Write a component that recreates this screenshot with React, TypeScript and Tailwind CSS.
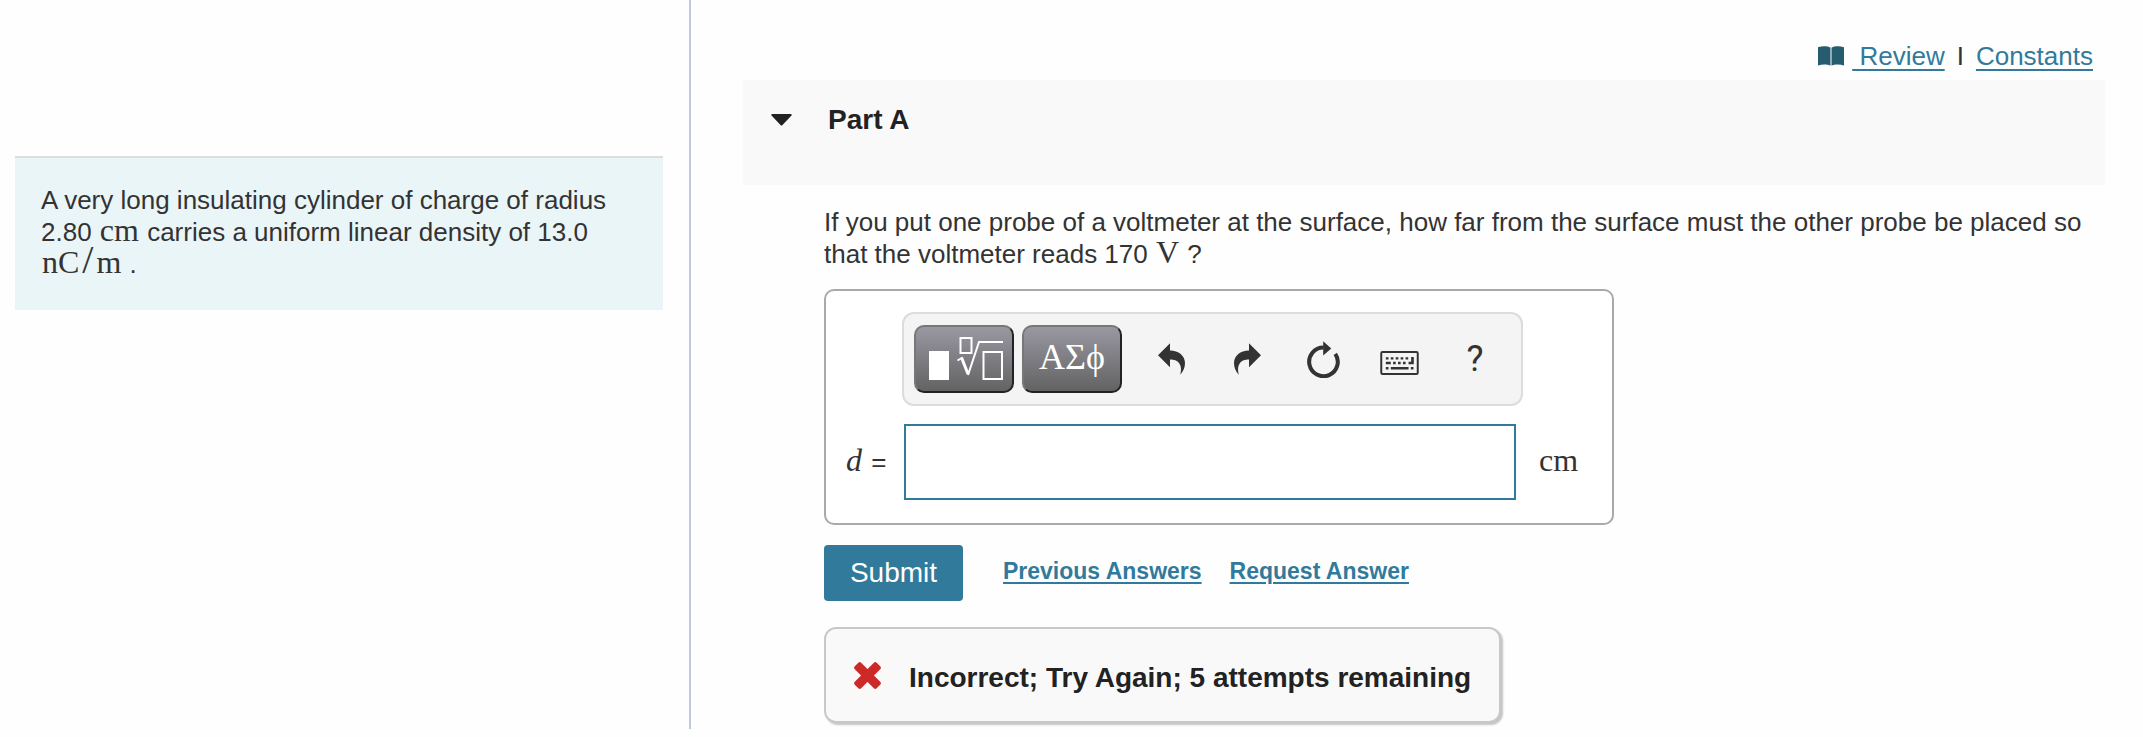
import React, { useState } from "react";

const BookIcon: React.FC = () => (
  <svg className="w-[26px] h-5" viewBox="0 0 26 20" fill="#255c70" aria-hidden="true">
    <path d="M0 1.2C4 0 9 0 12 1.4V19.4C9 18.2 4 18.2 0 19.4Z" />
    <path d="M14 1.4C17 0 22 0 26 1.2V19.4C22 18.2 17 18.2 14 19.4Z" />
    <path d="M12 1.4H14V19.4H12Z" opacity=".5" />
  </svg>
);

const TemplateIcon: React.FC = () => (
  <svg className="w-[78px] h-[44px]" viewBox="-2 0 78 44" fill="none" stroke="#fff" aria-hidden="true">
    <rect x="2" y="14" width="20" height="29" fill="#fff" stroke="none" />
    <rect x="33.5" y="1" width="11" height="15" strokeWidth="2" />
    <path d="M30.5 23.5L35.5 20.5" strokeWidth="2" />
    <path d="M34.5 20.5L41 37" strokeWidth="3" />
    <path d="M41 38L52 5H76" strokeWidth="2" />
    <rect x="56.5" y="15" width="18.5" height="27" strokeWidth="2" />
  </svg>
);

const UndoIcon: React.FC<{ flipped?: boolean }> = ({ flipped }) => (
  <svg
    className={flipped ? "w-[27px] h-8 -scale-x-100" : "w-[27px] h-8"}
    viewBox="0 0 81 95"
    fill="#333"
    aria-hidden="true"
  >
    <path d="M0 36L36 0V22C62 22 81 38 81 60C81 72 76 84 67 95C70 80 70 70 64 61C57 51 48 49 36 49V72Z" />
  </svg>
);

const ResetIcon: React.FC = () => (
  <svg className="w-[33px] h-[37px]" viewBox="0 0 98 110" fill="none" aria-hidden="true">
    <path d="M84 38A42.5 42.5 0 1 1 49 19.5" stroke="#333" strokeWidth="12" />
    <path d="M48 1L72 22L48 43Z" fill="#333" />
  </svg>
);

const KeyboardIcon: React.FC = () => (
  <svg className="w-[39px] h-6" viewBox="0 0 117 73" fill="#333" aria-hidden="true">
    <rect x="3" y="3" width="111" height="67" rx="4" fill="none" stroke="#333" strokeWidth="6" />
    <path d="M17 19h8v7h-8zM32 19h8v7h-8zM47 19h8v7h-8zM62 19h8v7h-8zM77 19h8v7h-8z" />
    <path d="M17 33h15v7H17zM39 33h8v7h-8zM54 33h8v7h-8zM69 33h8v7h-8z" />
    <path d="M94 18h8v22H86v-7h8z" />
    <path d="M17 49h8v7h-8zM32 49h54v7H32zM93 49h8v7h-8z" />
  </svg>
);

const CrossIcon: React.FC = () => (
  <svg className="w-[27px] h-[27px]" viewBox="0 0 27 27" fill="#cc2929" aria-hidden="true">
    <rect x="-2" y="9" width="31" height="9" rx="2" transform="rotate(45 13.5 13.5)" />
    <rect x="-2" y="9" width="31" height="9" rx="2" transform="rotate(-45 13.5 13.5)" />
  </svg>
);

const MathText: React.FC<{ children: React.ReactNode }> = ({ children }) => (
  <span className="mx-px font-['Liberation_Serif',serif] text-[32px] leading-[0]">{children}</span>
);

const keypadClass =
  "flex h-[68px] w-[100px] items-center justify-center rounded-[10px] border-2 border-t-[#777] border-l-[#777] border-r-[#222] border-b-[#222] bg-gradient-to-b from-[#9a98a2] to-[#636363] text-white";
const toolClass = "flex h-[68px] w-[76px] items-center justify-center";

const Toolbar: React.FC = () => (
  <div className="ml-[76px] mr-[89px] flex items-center rounded-xl border-2 border-[#dcdcdc] bg-[#f4f4f4] py-[11px] pl-[10px]">
    <button type="button" aria-label="Templates" className={keypadClass}>
      <TemplateIcon />
    </button>
    <button type="button" aria-label="Symbols" className={`${keypadClass} ml-2 mr-[11px] pb-1`}>
      <span className="font-['Liberation_Serif',serif] text-[36px] leading-none">ΑΣϕ</span>
    </button>
    <button type="button" aria-label="Undo" className={toolClass}>
      <UndoIcon />
    </button>
    <button type="button" aria-label="Redo" className={toolClass}>
      <UndoIcon flipped />
    </button>
    <button type="button" aria-label="Reset" className={toolClass}>
      <ResetIcon />
    </button>
    <button type="button" aria-label="Keyboard shortcuts" className={`${toolClass} pt-2`}>
      <KeyboardIcon />
    </button>
    <button type="button" aria-label="Help" className={`${toolClass} font-[Roboto,sans-serif] text-[36px] text-[#333]`}>
      ?
    </button>
  </div>
);

const App: React.FC = () => {
  const [answer, setAnswer] = useState("");
  const [isOpen, setIsOpen] = useState(true);

  return (
    <div className="flex min-h-screen bg-[#fefefe] pb-2 font-['Liberation_Sans',Arial,sans-serif] text-[26px] leading-8 text-[#333]">
      {/* Problem statement */}
      <aside className="w-[691px] shrink-0 border-r-2 border-[#bccadc] pl-[15px] pr-[26px] pt-[156px]">
        <p className="border-t-2 border-[#dddddd] bg-[#eaf5f8] px-[26px] pb-[30px] pt-[26px]">
          A very long insulating cylinder of charge of radius 2.80 <MathText>cm</MathText> carries a uniform linear
          density of 13.0{" "}
          <MathText>
            nC<span className="mx-[3px] text-[40px]">/</span>m
          </MathText>{" "}
          .
        </p>
      </aside>

      <main className="min-w-0 flex-1 pl-[52px] pr-[38px]">
        <nav className="flex items-center justify-end pb-2 pr-3 pt-10 text-[#317a9b]">
          <BookIcon />
          <a href="#review" className="ml-2 whitespace-pre underline decoration-2 underline-offset-4">
            {" Review"}
          </a>
          <span className="mx-3 text-[#333]">I</span>
          <a href="#constants" className="underline decoration-2 underline-offset-4">
            Constants
          </a>
        </nav>

        <header className="bg-[#f9f9f9] pb-[49px] pl-7 pt-6">
          <button
            type="button"
            aria-expanded={isOpen}
            onClick={() => setIsOpen(!isOpen)}
            className="flex items-center text-[28px] font-bold leading-8 text-[#222]"
          >
            <svg className="mr-9 h-3 w-[21px]" viewBox="0 0 21 12" fill="#222" aria-hidden="true">
              <path d="M1 0H20Q21 0 20.5 1.5L11.5 11Q10.5 12 9.5 11L.5 1.5Q0 0 1 0Z" />
            </svg>
            Part A
          </button>
        </header>

        {isOpen && (
          <section className="pl-[81px] pt-[21px]">
            <p>
              If you put one probe of a voltmeter at the surface, how far from the surface must the other probe be placed
              so that the voltmeter reads 170 <MathText>V</MathText> ?
            </p>

            <div className="mt-[19px] max-w-[790px] rounded-[10px] border-2 border-[#a9a9a9] bg-white pb-[23px] pt-[21px]">
              <Toolbar />
              <div className="mt-[18px] flex items-center">
                <label htmlFor="answer" className="w-[78px] pl-5">
                  <i className="mr-0.5 font-['Liberation_Serif',serif] text-[32px] leading-[0]">d</i> =
                </label>
                <input
                  id="answer"
                  type="text"
                  value={answer}
                  onChange={(e) => setAnswer(e.target.value)}
                  className="h-[76px] min-w-0 flex-1 border-2 border-[#317a9b] bg-white px-3 outline-none"
                />
                <span className="w-24 pl-[22px]">
                  <MathText>cm</MathText>
                </span>
              </div>
            </div>

            <div className="mt-5 flex items-center text-[23px] font-bold text-[#317a9b]">
              <button type="button" className="mr-10 h-14 w-[139px] rounded bg-[#317a9b] text-[28px] font-normal text-white">
                Submit
              </button>
              <div className="flex gap-7 pb-1">
                <a href="#previous" className="underline decoration-2 underline-offset-3">
                  Previous Answers
                </a>
                <a href="#request" className="underline decoration-2 underline-offset-3">
                  Request Answer
                </a>
              </div>
            </div>

            <div
              role="status"
              className="mt-[26px] flex h-24 max-w-[677px] items-center rounded-xl border-2 border-[#c8c8c8] bg-[#f9f9f9] pl-7 text-[28px] font-bold text-[#222] shadow-[2px_2px_2px_#c4c4c4]"
            >
              <CrossIcon />
              <span className="ml-7 pt-1.5">Incorrect; Try Again; 5 attempts remaining</span>
            </div>
          </section>
        )}
      </main>
    </div>
  );
};

export default App;
